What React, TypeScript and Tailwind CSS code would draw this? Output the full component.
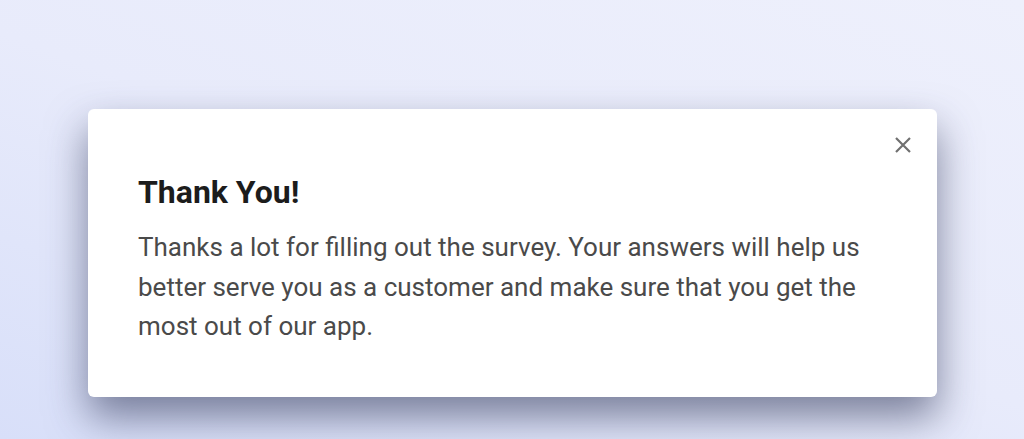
import React from "react";

export default function App() {
  return (
    <div
      className="w-[1024px] h-[439px] overflow-hidden bg-[linear-gradient(200deg,#eef0fc_0%,#e8ebfb_50%,#d8dff9_100%)] pt-[109px] pl-[88px]"
      style={{ fontFamily: "Roboto, 'Liberation Sans', sans-serif" }}
    >
      <div className="relative w-[849px] h-[288px] bg-white rounded-[6px] shadow-[0_20px_40px_rgba(50,56,90,0.6)] pl-[50px] pr-[50px] pt-[64px]">
        <button className="absolute right-[25px] top-[27px] w-[18px] h-[18px] flex items-center justify-center text-[#707070]">
          <svg width="18" height="18" viewBox="0 0 18 18" fill="none" stroke="currentColor" strokeWidth="2.2" strokeLinecap="butt">
            <path d="M2 2L16 16M16 2L2 16" />
          </svg>
        </button>
        <h2 className="text-[32px] leading-[38px] font-bold text-[#1c1c1c] m-0">Thank You!</h2>
        <p className="mt-[17px] text-[26px] leading-[39.5px] text-[#4a4a4a]">
          Thanks a lot for filling out the survey. Your answers will help us better serve you as a customer and make sure that you get the most out of our app.
        </p>
      </div>
    </div>
  );
}
